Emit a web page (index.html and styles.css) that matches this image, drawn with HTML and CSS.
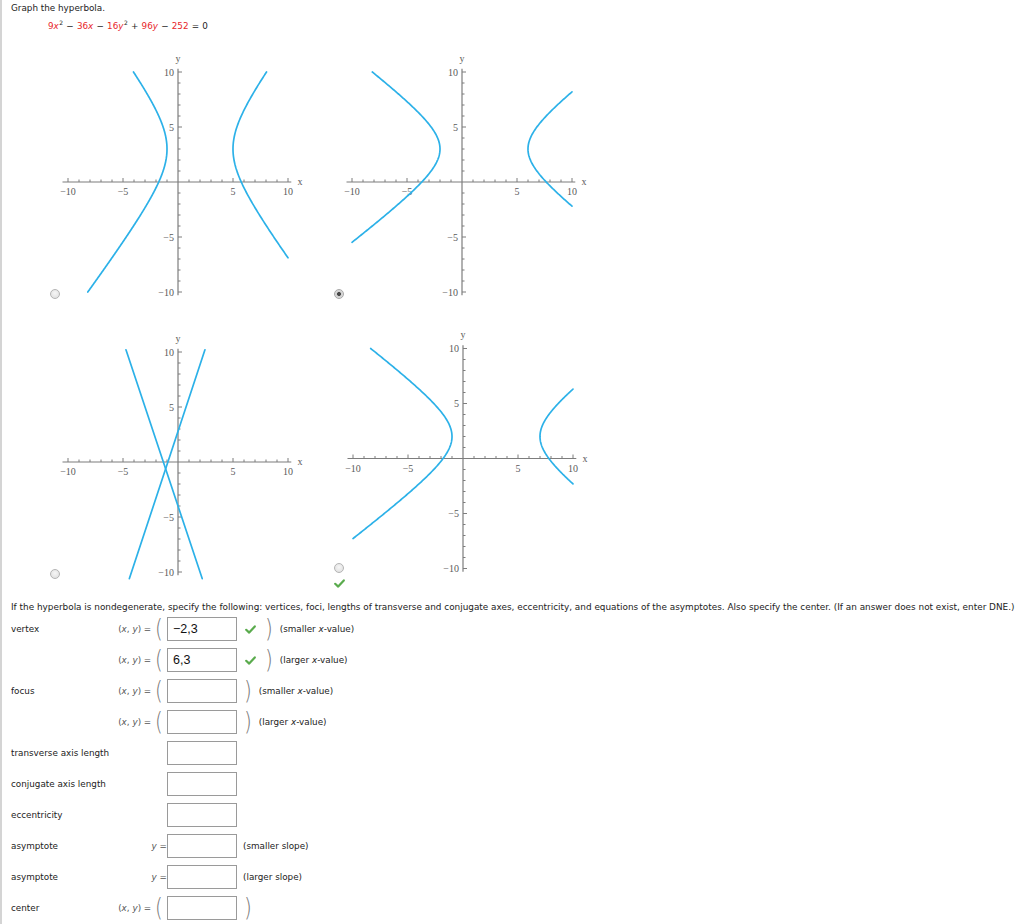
FILE: index.html
```html
<!DOCTYPE html>
<html>
<head>
<meta charset="utf-8">
<title>Graph the hyperbola</title>
<link rel="stylesheet" href="styles.css">
<script src="app.js" defer></script>
</head>
<body>
<div class="page">
  <div class="title">Graph the hyperbola.</div>
  <div class="equation"><span class="r">9<i>x</i></span><sup>2</sup><span class="op">−</span><span class="r">36<i>x</i></span><span class="op">−</span><span class="r">16<i>y</i></span><sup>2</sup><span class="op">+</span><span class="r">96<i>y</i></span><span class="op">−</span><span class="r">252</span><span class="op">=</span>0</div>

  <div class="graphs">
    <div class="cell">
      <div class="pick"><input type="radio" class="radio" name="g"></div>
      <svg class="plot" data-graph="g1" width="245" height="245" viewBox="0 0 245 245"></svg>
    </div>
    <div class="cell">
      <div class="pick"><input type="radio" class="radio" name="g" checked></div>
      <svg class="plot" data-graph="g2" width="245" height="245" viewBox="0 0 245 245"></svg>
    </div>
    <div class="cell">
      <div class="pick"><input type="radio" class="radio" name="g"></div>
      <svg class="plot" data-graph="g3" width="245" height="245" viewBox="0 0 245 245"></svg>
    </div>
    <div class="cell">
      <div class="pick pick-checked"><input type="radio" class="radio" name="g">
        <svg class="check" width="11" height="9" viewBox="0 0 11 9"><path d="M1.2 4.8 L4.2 7.6 L9.8 1.4"/></svg>
      </div>
      <svg class="plot" data-graph="g4" width="245" height="245" viewBox="0 0 245 245"></svg>
    </div>
  </div>

  <div class="instructions">If the hyperbola is nondegenerate, specify the following: vertices, foci, lengths of transverse and conjugate axes, eccentricity, and equations of the asymptotes. Also specify the center. (If an answer does not exist, enter DNE.)</div>

  <div class="form">
    <div class="row">
      <span class="label">vertex</span>
      <span class="prefix"><span class="xy">(<i>x</i>, <i>y</i>) =</span><span class="paren">(</span></span>
      <input class="box" value="−2,3" readonly>
      <span class="suffix"><svg class="check ok" width="11" height="9" viewBox="0 0 11 9"><path d="M1.2 4.8 L4.2 7.6 L9.8 1.4"/></svg><span class="paren close">)</span><span class="note">(smaller <i>x</i>-value)</span></span>
    </div>
    <div class="row">
      <span class="label"></span>
      <span class="prefix"><span class="xy">(<i>x</i>, <i>y</i>) =</span><span class="paren">(</span></span>
      <input class="box" value="6,3" readonly>
      <span class="suffix"><svg class="check ok" width="11" height="9" viewBox="0 0 11 9"><path d="M1.2 4.8 L4.2 7.6 L9.8 1.4"/></svg><span class="paren close">)</span><span class="note">(larger <i>x</i>-value)</span></span>
    </div>
    <div class="row">
      <span class="label">focus</span>
      <span class="prefix"><span class="xy">(<i>x</i>, <i>y</i>) =</span><span class="paren">(</span></span>
      <input class="box" value="" readonly>
      <span class="suffix"><span class="paren close near">)</span><span class="note">(smaller <i>x</i>-value)</span></span>
    </div>
    <div class="row">
      <span class="label"></span>
      <span class="prefix"><span class="xy">(<i>x</i>, <i>y</i>) =</span><span class="paren">(</span></span>
      <input class="box" value="" readonly>
      <span class="suffix"><span class="paren close near">)</span><span class="note">(larger <i>x</i>-value)</span></span>
    </div>
    <div class="row">
      <span class="label">transverse axis length</span>
      <span class="prefix"></span>
      <input class="box" value="" readonly>
      <span class="suffix"></span>
    </div>
    <div class="row">
      <span class="label">conjugate axis length</span>
      <span class="prefix"></span>
      <input class="box" value="" readonly>
      <span class="suffix"></span>
    </div>
    <div class="row">
      <span class="label">eccentricity</span>
      <span class="prefix"></span>
      <input class="box" value="" readonly>
      <span class="suffix"></span>
    </div>
    <div class="row">
      <span class="label">asymptote</span>
      <span class="prefix"><span class="xy"><i>y</i> =</span></span>
      <input class="box" value="" readonly>
      <span class="suffix"><span class="note slope">(smaller slope)</span></span>
    </div>
    <div class="row">
      <span class="label">asymptote</span>
      <span class="prefix"><span class="xy"><i>y</i> =</span></span>
      <input class="box" value="" readonly>
      <span class="suffix"><span class="note slope">(larger slope)</span></span>
    </div>
    <div class="row">
      <span class="label">center</span>
      <span class="prefix"><span class="xy">(<i>x</i>, <i>y</i>) =</span><span class="paren">(</span></span>
      <input class="box" value="" readonly>
      <span class="suffix"><span class="paren close near">)</span></span>
    </div>
  </div>
</div>
</body>
</html>
```

FILE: styles.css
```css
html, body {
  margin: 0;
  padding: 0;
  background: #fff;
}
body {
  font-family: "DejaVu Sans", Verdana, sans-serif;
  font-size: 8.8px;
  color: #222;
}
.page {
  border-left: 2px solid #d4d4d4;
  min-height: 924px;
  box-sizing: border-box;
  padding: 3px 0 0 9px;
}
.title {
  line-height: 11px;
}
.equation {
  margin: 6.5px 0 0 37px;
  line-height: 11px;
  color: #222;
}
.equation .r {
  color: #e8262a;
}
.equation sup {
  font-size: 6px;
  vertical-align: 4px;
  line-height: 0;
  margin-left: 0.5px;
}
.equation .op {
  margin: 0 3.2px;
}
.graphs {
  margin: 23.5px 0 0 39px;
  display: grid;
  grid-template-columns: 284px 284px;
  row-gap: 35px;
}
.cell {
  display: flex;
  align-items: flex-end;
}
.pick {
  display: flex;
  flex-direction: column;
  align-items: center;
  width: 10px;
  margin-right: 2px;
  margin-bottom: 1.5px;
}
.pick-checked {
  margin-bottom: -7.5px;
  gap: 5.5px;
}
.radio {
  -webkit-appearance: none;
  appearance: none;
  width: 10px;
  height: 10px;
  margin: 0;
  box-sizing: border-box;
  border-radius: 50%;
  border: 1px solid #b4b4b4;
  background: radial-gradient(circle at 50% 40%, #f6f6f6 0, #dcdcdc 100%);
}
.radio:checked {
  border-color: #a8a8a8;
  background: radial-gradient(circle, #4a4a4a 0, #4a4a4a 1.6px, #d0d0d0 2.3px, #e6e6e6 100%);
}
.check {
  display: block;
}
.check path {
  fill: none;
  stroke: #5aab4d;
  stroke-width: 2.2;
  stroke-linecap: round;
  stroke-linejoin: round;
}
.plot {
  display: block;
  overflow: visible;
}
.plot .axis, .plot .tick {
  stroke: #7d7d7d;
  stroke-width: 1.2;
  fill: none;
}
.plot .tick {
  stroke-width: 1;
}
.plot .curve {
  fill: none;
  stroke: #2cb1e8;
  stroke-width: 1.7;
  stroke-linecap: round;
  stroke-linejoin: round;
}
.plot text {
  font-family: "Liberation Serif", "DejaVu Serif", serif;
  font-size: 10px;
  fill: #5a5a5a;
}
.plot .lx, .plot .ax {
  text-anchor: middle;
}
.plot .ly {
  text-anchor: end;
}
.instructions {
  margin-top: 21.5px;
  line-height: 11px;
  font-size: 8.9px;
  white-space: nowrap;
}
.form {
  margin-top: 4.8px;
  display: flex;
  flex-direction: column;
  gap: 7px;
}
.row {
  display: grid;
  grid-template-columns: 100px 56px 70px 1fr;
  align-items: center;
  height: 24px;
}
.prefix {
  display: flex;
  justify-content: flex-end;
  align-items: center;
  color: #555;
}
.xy {
  white-space: nowrap;
}
.paren {
  font-family: "DejaVu Sans", sans-serif;
  font-weight: 200;
  font-size: 25px;
  line-height: 24px;
  color: #777;
  margin: 0 3px 0 3px;
  transform: scaleX(0.8);
}
.suffix {
  display: flex;
  align-items: center;
}
.suffix .check.ok {
  margin-left: 8px;
}
.paren.close {
  margin: 0 0 0 8px;
}
.paren.close.near {
  margin-left: 6px;
}
.note {
  margin-left: 6px;
  white-space: nowrap;
}
.note.slope {
  margin-left: 6px;
}
.box {
  width: 70px;
  height: 24px;
  box-sizing: border-box;
  border: 1px solid #9a9a9a;
  border-radius: 0;
  padding: 0 5px;
  margin: 0;
  font-family: "Liberation Sans", Arial, sans-serif;
  font-size: 12.5px;
  color: #111;
  background: #fff;
  outline: none;
}
```

FILE: app.js
```js
(function () {
  var U = 11;
  var configs = {
    g1: { ox: 116, oy: 127, curves: [[2, 3, 3, 4]] },
    g2: { ox: 116, oy: 127, curves: [[2, 3, 4, 3]] },
    g3: { ox: 116, oy: 127, lines: [[-4.73, 10.2, 2.2, -10.6], [-4.42, -10.6, 2.45, 10.2]] },
    g4: { ox: 117, oy: 123.5, curves: [[3, 2, 4, 3]] }
  };
  function fmt(n) { return Math.round(n * 100) / 100; }
  var plots = document.querySelectorAll('svg.plot');
  for (var p = 0; p < plots.length; p++) {
    var svg = plots[p];
    var c = configs[svg.getAttribute('data-graph')];
    var X = function (x) { return fmt(c.ox + U * x); };
    var Y = function (y) { return fmt(c.oy - U * y); };
    var h = '';
    h += '<line class="axis" x1="' + X(-10.5) + '" y1="' + Y(0) + '" x2="' + X(10.3) + '" y2="' + Y(0) + '"/>';
    h += '<line class="axis" x1="' + X(0) + '" y1="' + Y(10.3) + '" x2="' + X(0) + '" y2="' + Y(-10.3) + '"/>';
    var t = '';
    for (var i = -10; i <= 10; i++) {
      if (i === 0) continue;
      var L = (i % 5 === 0) ? 4 : 2.5;
      t += 'M' + X(i) + ' ' + Y(0) + 'v' + (-L);
      t += 'M' + X(0) + ' ' + Y(i) + 'h' + L;
    }
    h += '<path class="tick" d="' + t + '"/>';
    [-10, -5, 5, 10].forEach(function (v) {
      var lab = v < 0 ? '\u2212' + (-v) : '' + v;
      h += '<text class="lx" x="' + X(v) + '" y="' + fmt(Y(0) + 13) + '">' + lab + '</text>';
      h += '<text class="ly" x="' + fmt(X(0) - 4) + '" y="' + fmt(Y(v) + 3.5) + '">' + lab + '</text>';
    });
    h += '<text class="ax" x="' + X(11.1) + '" y="' + fmt(Y(0) + 3) + '">x</text>';
    h += '<text class="ax" x="' + X(0) + '" y="' + fmt(Y(11.2) + 3) + '">y</text>';
    if (c.curves) {
      c.curves.forEach(function (cv) {
        var hh = cv[0], k = cv[1], a = cv[2], b = cv[3];
        [-1, 1].forEach(function (s) {
          var lim = s * 10;
          var r = (lim - hh) / a;
          var d = b * Math.sqrt(r * r - 1);
          var y0 = Math.max(-10, k - d), y1 = Math.min(10, k + d);
          var pts = [];
          var N = 240;
          for (var j = 0; j <= N; j++) {
            var y = y0 + (y1 - y0) * j / N;
            var q = (y - k) / b;
            var x = hh + s * a * Math.sqrt(1 + q * q);
            pts.push(X(x) + ',' + Y(y));
          }
          h += '<polyline class="curve" points="' + pts.join(' ') + '"/>';
        });
      });
    }
    if (c.lines) {
      c.lines.forEach(function (l) {
        h += '<line class="curve" x1="' + X(l[0]) + '" y1="' + Y(l[1]) + '" x2="' + X(l[2]) + '" y2="' + Y(l[3]) + '"/>';
      });
    }
    svg.innerHTML = h;
  }
})();
```
